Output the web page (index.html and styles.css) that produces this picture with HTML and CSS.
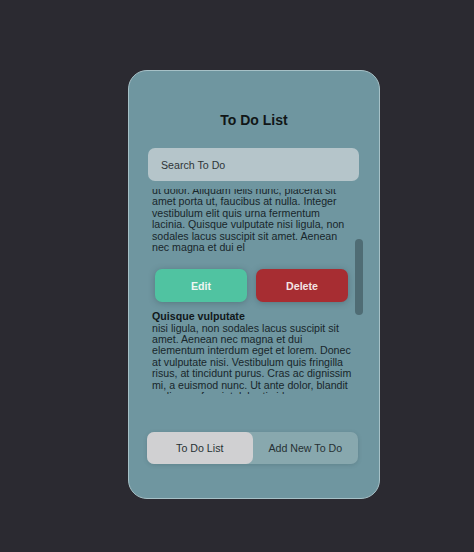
FILE: index.html
```html
<!DOCTYPE html>
<html lang="en">
<head>
<meta charset="utf-8">
<title>To Do List</title>
<link rel="stylesheet" href="styles.css">
</head>
<body>
<main class="card">
  <h1 class="title">To Do List</h1>
  <input class="search" type="text" placeholder="Search To Do">
  <section class="list">
    <div class="list-inner">
      <article class="item">
        <p class="item-text">ut dolor. Aliquam felis nunc, placerat sit amet porta ut, faucibus at nulla. Integer vestibulum elit quis urna fermentum lacinia. Quisque vulputate nisi ligula, non sodales lacus suscipit sit amet. Aenean nec magna et dui el</p>
        <div class="actions">
          <button class="btn btn-edit">Edit</button>
          <button class="btn btn-delete">Delete</button>
        </div>
      </article>
      <article class="item">
        <h2 class="item-title">Quisque vulputate</h2>
        <p class="item-text">nisi ligula, non sodales lacus suscipit sit amet. Aenean nec magna et dui elementum interdum eget et lorem. Donec at vulputate nisi. Vestibulum quis fringilla risus, at tincidunt purus. Cras ac dignissim mi, a euismod nunc. Ut ante dolor, blandit a aliquam feugiat, lobortis id.</p>
      </article>
    </div>
    <div class="scroll-thumb"></div>
  </section>
  <nav class="tabs">
    <button class="tab tab-active">To Do List</button>
    <button class="tab">Add New To Do</button>
  </nav>
</main>
</body>
</html>
```
FILE: styles.css
```css
* { box-sizing: border-box; }

html, body {
  margin: 0;
  height: 100%;
}

body {
  background: #2b2a31;
  font-family: "Liberation Sans", Arial, sans-serif;
  padding: 70px 0 0 128px;
}

.card {
  width: 252px;
  height: 429px;
  background: #6f96a0;
  border: 1px solid #a6c1c7;
  border-radius: 19px;
  padding: 41px 20px 0 19px;
  display: flex;
  flex-direction: column;
}

.title {
  margin: 0;
  font-size: 14px;
  line-height: 16px;
  font-weight: bold;
  color: #111617;
  text-align: center;
  padding-left: 1px;
}

.search {
  margin-top: 20px;
  height: 33px;
  width: 100%;
  border: none;
  outline: none;
  border-radius: 7px;
  background: #b5c5ca;
  padding: 0 13px;
  font-family: inherit;
  font-size: 10.65px;
  color: #2f3638;
}

.search::placeholder {
  color: #2f3638;
}

.list {
  position: relative;
  margin-top: 8px;
  margin-right: -7px;
  height: 205px;
  overflow: hidden;
}

.list-inner {
  margin-top: -4px;
  padding-left: 4px;
  width: 205px;
}

.item-text {
  margin: 0;
  font-size: 10.65px;
  line-height: 11.4px;
  color: #18262b;
}

.item-title {
  margin: 7.5px 0 0;
  font-size: 10.65px;
  line-height: 13px;
  font-weight: bold;
  color: #10181b;
}

.actions {
  display: flex;
  gap: 9px;
  width: 196px;
  padding-left: 3px;
  margin-top: 15.6px;
}

.btn {
  flex: 1;
  height: 33px;
  border: none;
  border-radius: 7px;
  font-family: inherit;
  font-size: 10.65px;
  font-weight: bold;
  color: #eef6f3;
  box-shadow: 0 1px 6px rgba(40, 60, 65, 0.35);
}

.btn-edit { background: #50c3a1; }
.btn-delete { background: #a72d32; color: #f3e4e4; }

.scroll-thumb {
  position: absolute;
  left: 207px;
  top: 50px;
  width: 8px;
  height: 76px;
  border-radius: 4px;
  background: #4f6c74;
}

.tabs {
  margin-top: 38px;
  margin-left: -1px;
  width: 211px;
  height: 32px;
  display: flex;
  background: #88a8ae;
  border-radius: 7px;
  box-shadow: 0 1px 4px rgba(40, 60, 65, 0.2);
}

.tab {
  flex: 1;
  border: none;
  background: transparent;
  border-radius: 7px;
  font-family: inherit;
  font-size: 10.65px;
  color: #263033;
}

.tab-active {
  background: #d0d0d2;
}
```
